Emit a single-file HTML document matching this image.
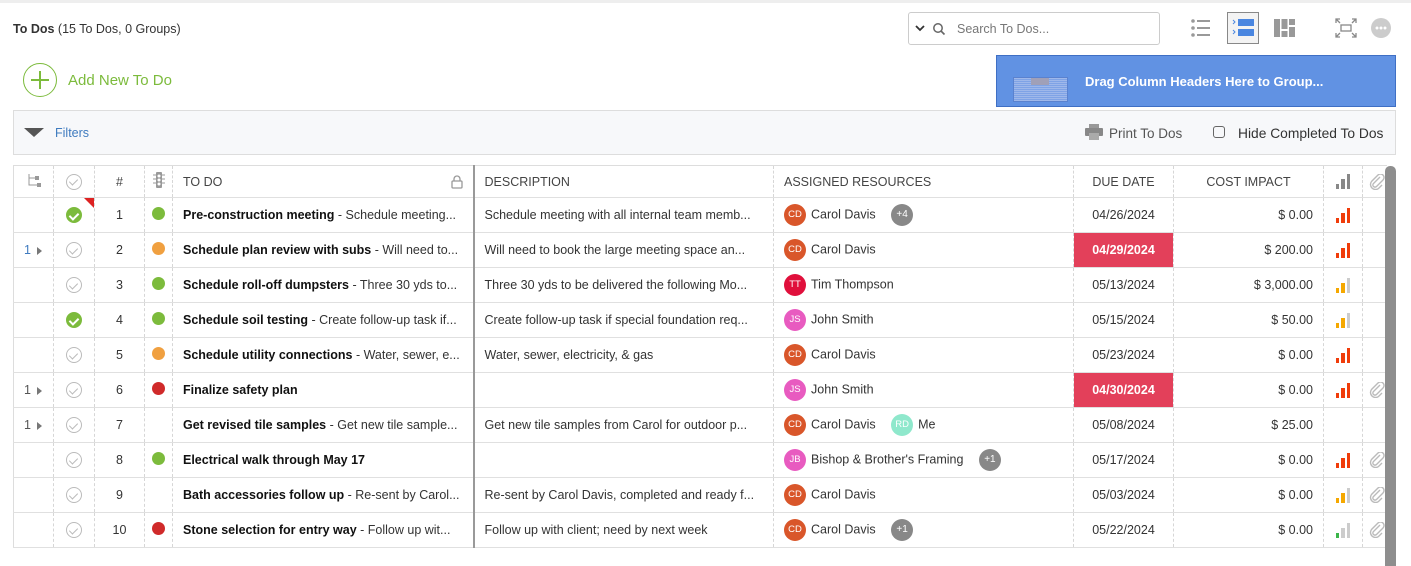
<!DOCTYPE html>
<html><head><meta charset="utf-8"><style>
*{box-sizing:border-box;margin:0;padding:0}
body{width:1411px;height:550px;overflow:hidden;background:#fff;font-family:"Liberation Sans",sans-serif;font-size:12.5px;color:#333;position:relative}
.abs{position:absolute}
table{position:absolute;left:13px;top:165px;border-collapse:collapse;table-layout:fixed;width:1373px}
td{height:35px;border-bottom:1px solid #e0e0e0;border-left:1px dashed #d6d6d6;white-space:nowrap;overflow:hidden;padding:0 10px;vertical-align:middle}
tr.h td{height:32px;color:#444;font-size:12.5px}
td.c{text-align:center;padding:0}
td.todo{border-right:2px solid #999;}
td.first{border-left:1px solid #ddd}
b{font-weight:bold;color:#111}
.dot{display:inline-block;width:13px;height:13px;border-radius:50%}
.ck{display:inline-block;width:16px;height:16px;border-radius:50%;border:1.3px solid #bbb;position:relative;vertical-align:middle}
.ck::after{content:"";position:absolute;left:4px;top:2.5px;width:4px;height:7px;border:solid #bbb;border-width:0 1.3px 1.3px 0;transform:rotate(45deg)}
.ck.g{background:#7cbb3c;border-color:#7cbb3c}
.ck.g::after{border-color:#fff;border-width:0 2px 2px 0}
.av{display:inline-block;width:22px;height:22px;border-radius:50%;color:#fff;font-size:9.5px;text-align:center;line-height:22px;vertical-align:middle;margin-right:5px}
.more{display:inline-block;width:22px;height:22px;border-radius:50%;background:#888;color:#fff;font-size:10px;text-align:center;line-height:22px;vertical-align:middle}
.bars{display:inline-block;position:relative;width:15px;height:15px;vertical-align:middle}
.bars i{position:absolute;bottom:0;width:3.5px}
.red{background:#e3405a;color:#fff;font-weight:bold}
.tri{display:inline-block;width:0;height:0;border-left:5px solid #777;border-top:4px solid transparent;border-bottom:4px solid transparent;margin-left:6px;vertical-align:middle}
.clip{display:inline-block;vertical-align:middle;margin-left:6px}
</style></head><body>
<svg width="0" height="0" style="position:absolute"><symbol id="clip" viewBox="0 0 16 16"><path d="M11 3L4.5 9.5a2 2 0 003 3L14 6a3.5 3.5 0 00-5-5L2.5 7.5a5 5 0 007 7L13 11" stroke="#bbb" stroke-width="1.4" fill="none"/></symbol></svg>
<div class="abs" style="left:0;top:0;width:1411px;height:3px;background:#eee"></div>
<div class="abs" style="left:13px;top:22px;font-size:12.5px;color:#333"><b style="color:#333">To Dos</b> (15 To Dos, 0 Groups)</div>
<div class="abs" style="left:23px;top:63px;width:34px;height:34px;border-radius:50%;border:1.3px solid #7cbb3c"></div>
<div class="abs" style="left:31px;top:79px;width:18px;height:2px;background:#7cbb3c"></div>
<div class="abs" style="left:39px;top:71px;width:2px;height:18px;background:#7cbb3c"></div>
<div class="abs" style="left:68px;top:72px;font-size:15px;color:#7cbb3c">Add New To Do</div>
<div class="abs" style="left:908px;top:12px;width:252px;height:33px;border:1px solid #ccc;border-radius:3px"></div>
<svg class="abs" style="left:914px;top:22px" width="40" height="14"><path d="M2 4l4 4 4-4" stroke="#333" stroke-width="1.8" fill="none"/><circle cx="24" cy="6" r="4.2" stroke="#666" stroke-width="1.5" fill="none"/><path d="M27 9l3.5 3.5" stroke="#666" stroke-width="1.6"/></svg>
<div class="abs" style="left:957px;top:22px;color:#777;font-size:12.5px">Search To Dos...</div>
<svg class="abs" style="left:1190px;top:18px" width="22" height="20"><g fill="#999"><circle cx="3" cy="3" r="1.8"/><circle cx="3" cy="10" r="1.8"/><circle cx="3" cy="17" r="1.8"/><rect x="7" y="2" width="13" height="2"/><rect x="7" y="9" width="13" height="2"/><rect x="7" y="16" width="13" height="2"/></g></svg>
<div class="abs" style="left:1227px;top:12px;width:32px;height:32px;border:1px solid #888;background:#f3f3f3"></div>
<svg class="abs" style="left:1232px;top:17px" width="24" height="22"><path d="M1 3l2 2-2 2M1 13l2 2-2 2" stroke="#4a86e0" fill="none"/><rect x="6" y="2" width="16" height="7" fill="#4a86e0"/><rect x="6" y="12" width="16" height="7" fill="#4a86e0"/></svg>
<svg class="abs" style="left:1274px;top:19px" width="22" height="18"><g fill="#999"><rect x="0" y="0" width="6" height="18"/><rect x="7.5" y="0" width="6" height="10"/><rect x="7.5" y="12" width="6" height="6"/><rect x="15" y="0" width="6" height="6"/><rect x="15" y="8" width="6" height="10"/></g></svg>
<svg class="abs" style="left:1335px;top:18px" width="22" height="20"><g stroke="#888" fill="none" stroke-width="1.3"><path d="M1 5V1h4M1 1l4 4M17 1h4v4M21 1l-4 4M1 15v4h4M1 19l4-4M21 15v4h-4M21 19l-4-4"/><rect x="6" y="7" width="10" height="6"/></g></svg>
<div class="abs" style="left:1371px;top:18px;width:20px;height:20px;border-radius:50%;background:#ccc"></div>
<div class="abs" style="left:1375px;top:26px;width:12px;height:4px;background:radial-gradient(circle,#fff 1.3px,transparent 1.6px) 0 0/4px 4px"></div>
<div class="abs" style="left:996px;top:55px;width:400px;height:52px;background:#6192e3;border:1px solid #3f6fc4"></div>
<div class="abs" style="left:1013px;top:77px;width:55px;height:25px;background:repeating-linear-gradient(0deg,#9fb8ea 0 1px,#7fa3e6 1px 2px);border:1px solid #5a82cf"></div>
<div class="abs" style="left:1031px;top:78px;width:18px;height:7px;background:#a0a0b8"></div>
<div class="abs" style="left:1085px;top:74px;color:#fff;font-weight:bold;font-size:13px">Drag Column Headers Here to Group...</div>
<div class="abs" style="left:13px;top:110px;width:1383px;height:45px;background:#f7f8fa;border:1px solid #ddd"></div>
<div class="abs" style="left:24px;top:128px;width:0;height:0;border-left:10px solid transparent;border-right:10px solid transparent;border-top:9px solid #555"></div>
<div class="abs" style="left:55px;top:126px;color:#3f7bbf;font-size:12.5px">Filters</div>
<svg class="abs" style="left:1085px;top:124px" width="18" height="16"><rect x="4" y="0" width="10" height="4" fill="#999"/><rect x="0" y="4" width="18" height="8" rx="1" fill="#888"/><rect x="4" y="9" width="10" height="7" fill="#aaa"/></svg>
<div class="abs" style="left:1109px;top:126px;color:#555;font-size:13.5px">Print To Dos</div>
<div class="abs" style="left:1213px;top:126px;width:12px;height:12px;border:1px solid #666;border-radius:3px"></div>
<div class="abs" style="left:1238px;top:126px;color:#333;font-size:13.8px">Hide Completed To Dos</div>
<table>
<colgroup><col style="width:40px"><col style="width:41px"><col style="width:50px"><col style="width:28px"><col style="width:301px"><col style="width:300px"><col style="width:300px"><col style="width:100px"><col style="width:150px"><col style="width:39px"><col style="width:24px"></colgroup>
<tr class="h" style="border-top:1px solid #ddd">
<td class="c first"><svg width="14" height="14"><path d="M2 1v11h10M2 5h6" stroke="#999" fill="none"/><rect x="8" y="3" width="4" height="4" fill="#999"/><rect x="10" y="10" width="4" height="4" fill="#999"/></svg></td>
<td class="c"><span class="ck"></span></td><td class="c">#</td>
<td class="c"><svg width="12" height="18"><rect x="3" y="1" width="6" height="16" rx="1" fill="#999"/><g fill="#fff"><circle cx="6" cy="5" r="1.5"/><circle cx="6" cy="9" r="1.5"/><circle cx="6" cy="13" r="1.5"/></g><path d="M0 4h3M0 8h3M0 12h3M9 4h3M9 8h3M9 12h3" stroke="#999"/></svg></td>
<td class="todo">TO DO<svg style="float:right" width="12" height="14"><path d="M3 6V4a3 3 0 016 0v2" stroke="#999" fill="none" stroke-width="1.3"/><rect x="1" y="6" width="10" height="7" rx="1" stroke="#999" fill="none" stroke-width="1.3"/></svg></td>
<td>DESCRIPTION</td><td>ASSIGNED RESOURCES</td><td class="c">DUE DATE</td><td class="c">COST IMPACT</td>
<td class="c"><span class="bars"><i style="left:0;height:5px;background:#888"></i><i style="left:5.5px;height:10px;background:#888"></i><i style="left:11px;height:15px;background:#888"></i></span></td>
<td style="padding:0"><svg class="clip" width="16" height="16"><use href="#clip"/></svg></td></tr>
<tr><td class="first"></td><td class="c" style="position:relative"><span class="ck g"></span><span style="position:absolute;right:0;top:0;border-top:10px solid #d22;border-left:10px solid transparent"></span></td><td class="c">1</td><td class="c"><span class="dot" style="background:#7cbb3c"></span></td><td class="todo"><b>Pre-construction meeting</b> - Schedule meeting...</td><td>Schedule meeting with all internal team memb...</td><td><span class="av" style="background:#d9562a">CD</span>Carol Davis <span class="more" style="margin-left:12px">+4</span></td><td class="c">04/26/2024</td><td style="text-align:right">$ 0.00</td><td class="c"><span class="bars"><i style="left:0;height:5px;background:#f03c0a"></i><i style="left:5.5px;height:10px;background:#f03c0a"></i><i style="left:11px;height:15px;background:#f03c0a"></i></span></td><td></td></tr>
<tr><td class="first" style="padding:0 0 0 10px;color:#3f7bbf">1<span class="tri"></span></td><td class="c"><span class="ck"></span></td><td class="c">2</td><td class="c"><span class="dot" style="background:#f0a040"></span></td><td class="todo"><b>Schedule plan review with subs</b> - Will need to...</td><td>Will need to book the large meeting space an...</td><td><span class="av" style="background:#d9562a">CD</span>Carol Davis</td><td class="c red">04/29/2024</td><td style="text-align:right">$ 200.00</td><td class="c"><span class="bars"><i style="left:0;height:5px;background:#f03c0a"></i><i style="left:5.5px;height:10px;background:#f03c0a"></i><i style="left:11px;height:15px;background:#f03c0a"></i></span></td><td></td></tr>
<tr><td class="first"></td><td class="c"><span class="ck"></span></td><td class="c">3</td><td class="c"><span class="dot" style="background:#7cbb3c"></span></td><td class="todo"><b>Schedule roll-off dumpsters</b> - Three 30 yds to...</td><td>Three 30 yds to be delivered the following Mo...</td><td><span class="av" style="background:#e0103c">TT</span>Tim Thompson</td><td class="c">05/13/2024</td><td style="text-align:right">$ 3,000.00</td><td class="c"><span class="bars"><i style="left:0;height:5px;background:#f5a800"></i><i style="left:5.5px;height:10px;background:#f5a800"></i><i style="left:11px;height:15px;background:#ccc"></i></span></td><td></td></tr>
<tr><td class="first"></td><td class="c"><span class="ck g"></span></td><td class="c">4</td><td class="c"><span class="dot" style="background:#7cbb3c"></span></td><td class="todo"><b>Schedule soil testing</b> - Create follow-up task if...</td><td>Create follow-up task if special foundation req...</td><td><span class="av" style="background:#e85bc0">JS</span>John Smith</td><td class="c">05/15/2024</td><td style="text-align:right">$ 50.00</td><td class="c"><span class="bars"><i style="left:0;height:5px;background:#f5a800"></i><i style="left:5.5px;height:10px;background:#f5a800"></i><i style="left:11px;height:15px;background:#ccc"></i></span></td><td></td></tr>
<tr><td class="first"></td><td class="c"><span class="ck"></span></td><td class="c">5</td><td class="c"><span class="dot" style="background:#f0a040"></span></td><td class="todo"><b>Schedule utility connections</b> - Water, sewer, e...</td><td>Water, sewer, electricity, &amp; gas</td><td><span class="av" style="background:#d9562a">CD</span>Carol Davis</td><td class="c">05/23/2024</td><td style="text-align:right">$ 0.00</td><td class="c"><span class="bars"><i style="left:0;height:5px;background:#f03c0a"></i><i style="left:5.5px;height:10px;background:#f03c0a"></i><i style="left:11px;height:15px;background:#f03c0a"></i></span></td><td></td></tr>
<tr><td class="first" style="padding:0 0 0 10px;color:#555">1<span class="tri"></span></td><td class="c"><span class="ck"></span></td><td class="c">6</td><td class="c"><span class="dot" style="background:#d02a2a"></span></td><td class="todo"><b>Finalize safety plan</b></td><td></td><td><span class="av" style="background:#e85bc0">JS</span>John Smith</td><td class="c red">04/30/2024</td><td style="text-align:right">$ 0.00</td><td class="c"><span class="bars"><i style="left:0;height:5px;background:#f03c0a"></i><i style="left:5.5px;height:10px;background:#f03c0a"></i><i style="left:11px;height:15px;background:#f03c0a"></i></span></td><td style="padding:0"><svg class="clip" width="16" height="16"><use href="#clip"/></svg></td></tr>
<tr><td class="first" style="padding:0 0 0 10px;color:#555">1<span class="tri"></span></td><td class="c"><span class="ck"></span></td><td class="c">7</td><td class="c"></td><td class="todo"><b>Get revised tile samples</b> - Get new tile sample...</td><td>Get new tile samples from Carol for outdoor p...</td><td><span class="av" style="background:#d9562a">CD</span>Carol Davis <span class="av" style="background:#8fe8cc;margin-left:12px">RD</span>Me</td><td class="c">05/08/2024</td><td style="text-align:right">$ 25.00</td><td></td><td></td></tr>
<tr><td class="first"></td><td class="c"><span class="ck"></span></td><td class="c">8</td><td class="c"><span class="dot" style="background:#7cbb3c"></span></td><td class="todo"><b>Electrical walk through May 17</b></td><td></td><td><span class="av" style="background:#e85bc0">JB</span>Bishop &amp; Brother's Framing <span class="more" style="margin-left:12px">+1</span></td><td class="c">05/17/2024</td><td style="text-align:right">$ 0.00</td><td class="c"><span class="bars"><i style="left:0;height:5px;background:#f03c0a"></i><i style="left:5.5px;height:10px;background:#f03c0a"></i><i style="left:11px;height:15px;background:#f03c0a"></i></span></td><td style="padding:0"><svg class="clip" width="16" height="16"><use href="#clip"/></svg></td></tr>
<tr><td class="first"></td><td class="c"><span class="ck"></span></td><td class="c">9</td><td class="c"></td><td class="todo"><b>Bath accessories follow up </b> - Re-sent by Carol...</td><td>Re-sent by Carol Davis, completed and ready f...</td><td><span class="av" style="background:#d9562a">CD</span>Carol Davis</td><td class="c">05/03/2024</td><td style="text-align:right">$ 0.00</td><td class="c"><span class="bars"><i style="left:0;height:5px;background:#f5a800"></i><i style="left:5.5px;height:10px;background:#f5a800"></i><i style="left:11px;height:15px;background:#ccc"></i></span></td><td style="padding:0"><svg class="clip" width="16" height="16"><use href="#clip"/></svg></td></tr>
<tr><td class="first"></td><td class="c"><span class="ck"></span></td><td class="c">10</td><td class="c"><span class="dot" style="background:#d02a2a"></span></td><td class="todo"><b>Stone selection for entry way</b> - Follow up wit...</td><td>Follow up with client; need by next week</td><td><span class="av" style="background:#d9562a">CD</span>Carol Davis <span class="more" style="margin-left:12px">+1</span></td><td class="c">05/22/2024</td><td style="text-align:right">$ 0.00</td><td class="c"><span class="bars"><i style="left:0;height:5px;background:#3bb54a"></i><i style="left:5.5px;height:10px;background:#ccc"></i><i style="left:11px;height:15px;background:#ccc"></i></span></td><td style="padding:0"><svg class="clip" width="16" height="16"><use href="#clip"/></svg></td></tr>
</table>
<div class="abs" style="left:1385px;top:166px;width:11px;height:400px;background:#8e8e8e;border-radius:5px 5px 0 0"></div>
</body></html>
